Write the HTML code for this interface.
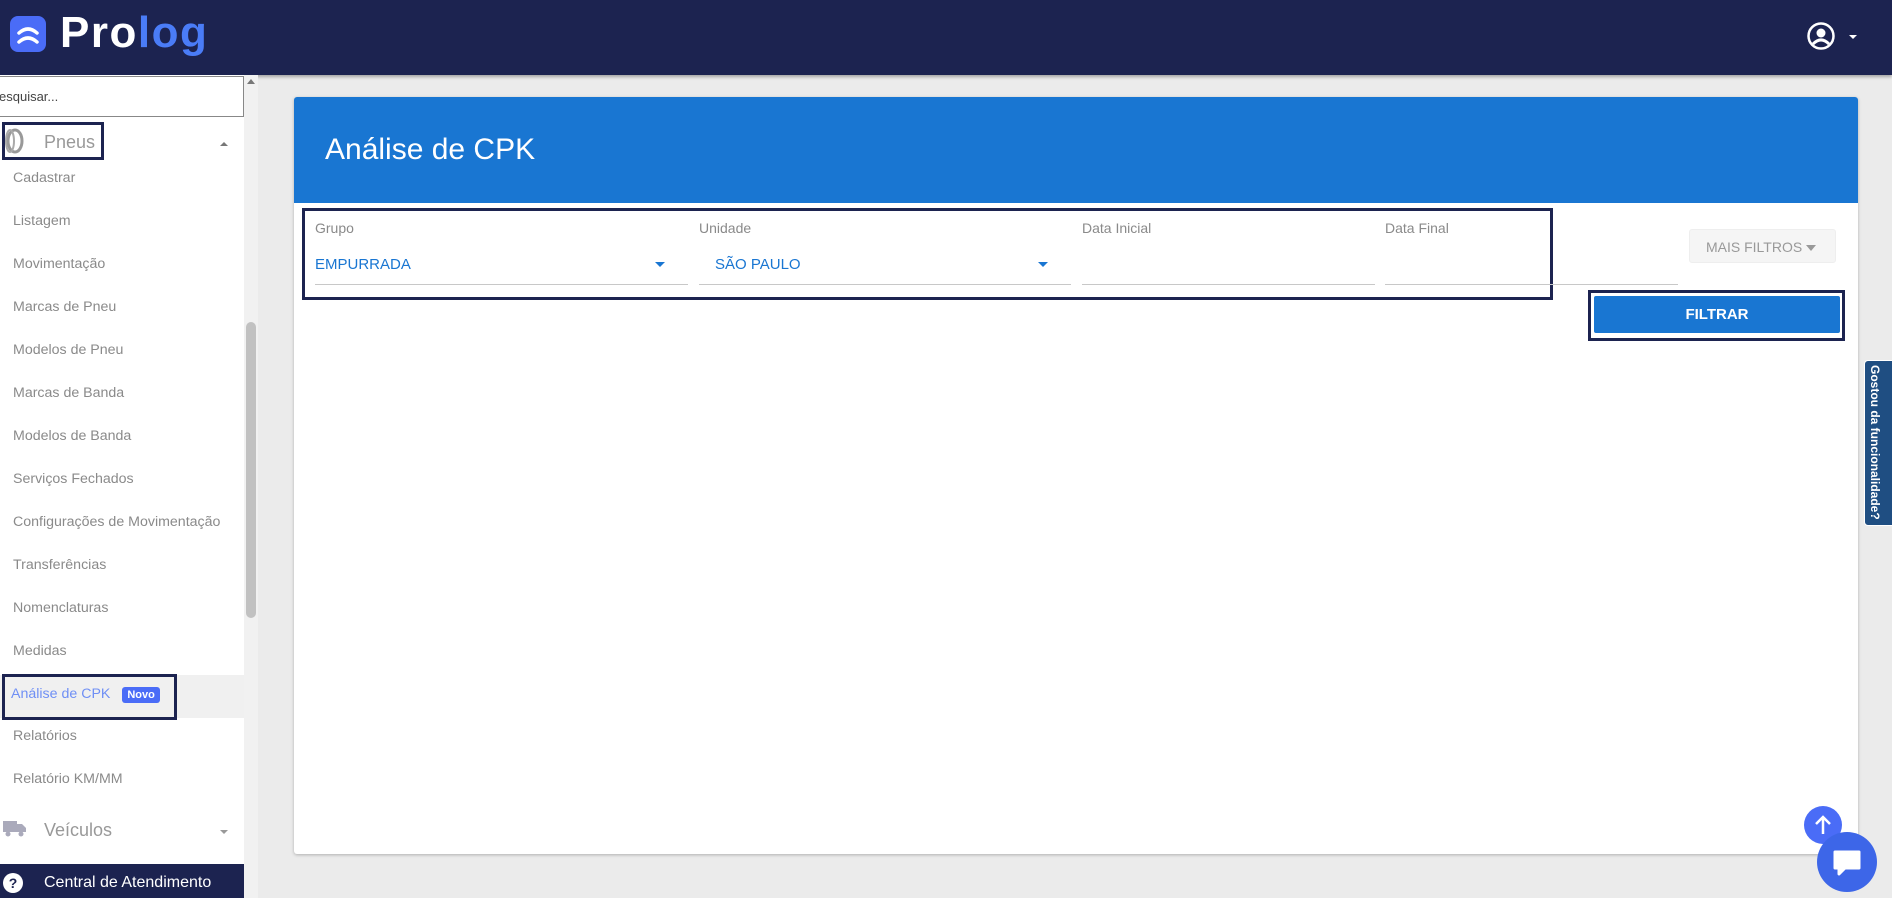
<!DOCTYPE html>
<html><head><meta charset="utf-8"><style>
*{box-sizing:border-box;margin:0;padding:0}
body{width:1892px;height:898px;overflow:hidden;background:#ebebeb;font-family:"Liberation Sans",sans-serif;position:relative}
.hdr{position:absolute;left:0;top:0;width:1892px;height:75px;background:#1c2350;box-shadow:0 2px 3px rgba(0,0,0,.3)}
.side{position:absolute;left:0;top:75px;width:244px;height:823px;background:#fff}
.sb{position:absolute;left:244px;top:75px;width:14px;height:823px;background:#f1f1f1}
.item{position:absolute;left:13px;font-size:14.2px;color:#8a8a8a}
.card{position:absolute;left:294px;top:97px;width:1564px;height:757px;background:#fff;box-shadow:0 1px 3px rgba(0,0,0,.25);border-radius:3px}
.ch{height:106px;background:#1976d2;border-radius:3px 3px 0 0;color:#fff;font-size:30px;padding:36px 0 0 31px}
.lbl{position:absolute;font-size:14px;color:#8a8a8a;top:123px}
.val{position:absolute;font-size:15px;color:#1976d2;top:159px}
.ul{position:absolute;top:187px;height:1px;background:#c8c8c8}
.car{position:absolute;top:165px;width:0;height:0;border-left:5px solid transparent;border-right:5px solid transparent;border-top:5px solid #1976d2}
</style></head><body>
<div class="hdr">
<svg style="position:absolute;left:10px;top:16px" width="36" height="36" viewBox="0 0 36 36"><rect width="36" height="36" rx="8" fill="#4a6cf7"/><path d="M9 17 Q18 9 27 17 M9 26 Q18 18 27 26" stroke="#fff" stroke-width="3.5" fill="none" stroke-linecap="round"/></svg>
<div style="position:absolute;left:60px;top:8px;font-size:44px;font-weight:bold;color:#fff;letter-spacing:1.5px">Pro<span style="color:#4a7cf7">log</span></div>
<svg style="position:absolute;left:1806px;top:21px" width="30" height="30" viewBox="0 0 30 30"><circle cx="15" cy="15" r="12.5" stroke="#fff" stroke-width="2.5" fill="none"/><circle cx="15" cy="12" r="4.5" fill="#fff"/><path d="M7 23 Q15 15 23 23" stroke="#fff" stroke-width="3" fill="none"/></svg>
<div style="position:absolute;left:1849px;top:35px;border-left:4px solid transparent;border-right:4px solid transparent;border-top:4px solid #fff"></div>
</div>
<div class="side">
<div style="position:absolute;left:-2px;top:1px;width:246px;height:41px;border:1px solid #888;font-size:13px;color:#444;padding:12px 0 0 0">esquisar...</div>
<div style="position:absolute;left:2px;top:47px;width:102px;height:38px;border:3px solid #1c2350"></div>
<svg style="position:absolute;left:4px;top:53px" width="20" height="26" viewBox="0 0 20 26"><ellipse cx="11" cy="13" rx="7" ry="11" stroke="#999" stroke-width="3" fill="none"/><ellipse cx="6" cy="13" rx="4" ry="11" stroke="#aaa" stroke-width="2" fill="none"/></svg>
<div class="item" style="left:44px;top:57px;font-size:18px;color:#999">Pneus</div>
<div style="position:absolute;left:220px;top:67px;border-left:4px solid transparent;border-right:4px solid transparent;border-bottom:4px solid #777"></div>
<div class="item" style="top:95px">Cadastrar</div>
<div class="item" style="top:138px">Listagem</div>
<div class="item" style="top:181px">Movimentação</div>
<div class="item" style="top:224px">Marcas de Pneu</div>
<div class="item" style="top:267px">Modelos de Pneu</div>
<div class="item" style="top:310px">Marcas de Banda</div>
<div class="item" style="top:353px">Modelos de Banda</div>
<div class="item" style="top:396px">Serviços Fechados</div>
<div class="item" style="top:439px">Configurações de Movimentação</div>
<div class="item" style="top:482px">Transferências</div>
<div class="item" style="top:525px">Nomenclaturas</div>
<div class="item" style="top:568px">Medidas</div>
<div style="position:absolute;left:0;top:600px;width:244px;height:43px;background:#f0f0f0"></div>
<div style="position:absolute;left:2px;top:599px;width:175px;height:46px;border:3px solid #1c2350"></div>
<div class="item" style="left:11px;top:611px;color:#6f8ff5">Análise de CPK <span style="display:inline-block;margin-left:8px;background:#4a6cf7;color:#fff;font-size:11px;font-weight:bold;padding:2px 5px;border-radius:3px">Novo</span></div>
<div class="item" style="top:653px">Relatórios</div>
<div class="item" style="top:696px">Relatório KM/MM</div>
<svg style="position:absolute;left:3px;top:745px" width="23" height="17" viewBox="0 0 23 17"><rect x="0" y="1" width="14" height="11" fill="#aab"/><path d="M14 4h5l4 4v4h-9z" fill="#aab"/><circle cx="5" cy="14" r="2.5" fill="#aab"/><circle cx="18" cy="14" r="2.5" fill="#aab"/></svg>
<div class="item" style="left:44px;top:745px;font-size:18px;color:#999">Veículos</div>
<div style="position:absolute;left:220px;top:755px;border-left:4px solid transparent;border-right:4px solid transparent;border-top:4px solid #999"></div>
<div style="position:absolute;left:0;top:789px;width:246px;height:34px;background:#1c2350"></div>
<svg style="position:absolute;left:3px;top:798px" width="20" height="20" viewBox="0 0 20 20"><circle cx="10" cy="10" r="10" fill="#fff"/><text x="10" y="15" text-anchor="middle" font-size="14" font-weight="bold" fill="#1c2350" font-family="Liberation Sans">?</text></svg>
<div style="position:absolute;left:44px;top:799px;font-size:16px;color:#fff">Central de Atendimento</div>
</div>
<div class="sb"><div style="position:absolute;left:2px;top:247px;width:10px;height:296px;background:#c1c1c1;border-radius:5px"></div>
<div style="position:absolute;left:3px;top:4px;border-left:4px solid transparent;border-right:4px solid transparent;border-bottom:5px solid #777"></div></div>
<div class="card">
<div class="ch">Análise de CPK</div>
<div style="position:absolute;left:8px;top:111px;width:1251px;height:92px;border:3px solid #1c2350"></div>
<div class="lbl" style="left:21px">Grupo</div><div class="val" style="left:21px">EMPURRADA</div><div class="car" style="left:361px"></div><div class="ul" style="left:21px;width:373px"></div>
<div class="lbl" style="left:405px">Unidade</div><div class="val" style="left:421px">SÃO PAULO</div><div class="car" style="left:744px"></div><div class="ul" style="left:405px;width:372px"></div>
<div class="lbl" style="left:788px">Data Inicial</div><div class="ul" style="left:788px;width:293px"></div>
<div class="lbl" style="left:1091px">Data Final</div><div class="ul" style="left:1091px;width:293px"></div>
<div style="position:absolute;left:1395px;top:132px;width:147px;height:34px;background:#f5f5f5;border:1px solid #eee;border-radius:3px;font-size:14px;color:#999;padding:9px 0 0 16px">MAIS FILTROS <span style="display:inline-block;border-left:5px solid transparent;border-right:5px solid transparent;border-top:6px solid #999;vertical-align:middle"></span></div>
<div style="position:absolute;left:1294px;top:193px;width:257px;height:51px;border:3px solid #1c2350"></div>
<div style="position:absolute;left:1300px;top:199px;width:246px;height:37px;background:#1976d2;border-radius:2px;color:#fff;font-weight:bold;font-size:15px;text-align:center;line-height:37px">FILTRAR</div>
</div>
<div style="position:absolute;left:1864px;top:360px;width:30px;height:166px;background:#1f4e82;border:1px solid #fff;border-radius:4px 0 0 4px"><div style="position:absolute;left:3px;top:4px;writing-mode:vertical-rl;color:#fff;font-weight:bold;font-size:12px">Gostou da funcionalidade?</div></div>
<svg style="position:absolute;left:1804px;top:806px" width="38" height="38" viewBox="0 0 38 38"><circle cx="19" cy="19" r="19" fill="#4a6cf7"/><path d="M19 28V11M12 18l7-7 7 7" stroke="#fff" stroke-width="2.5" fill="none"/></svg>
<svg style="position:absolute;left:1817px;top:832px" width="60" height="60" viewBox="0 0 60 60"><circle cx="30" cy="30" r="30" fill="#3d66e8"/><path d="M18 20h24v16H28l-6 6v-6h-4z" fill="#fff" stroke="#fff" stroke-linejoin="round" stroke-width="3"/></svg>
</body></html>
